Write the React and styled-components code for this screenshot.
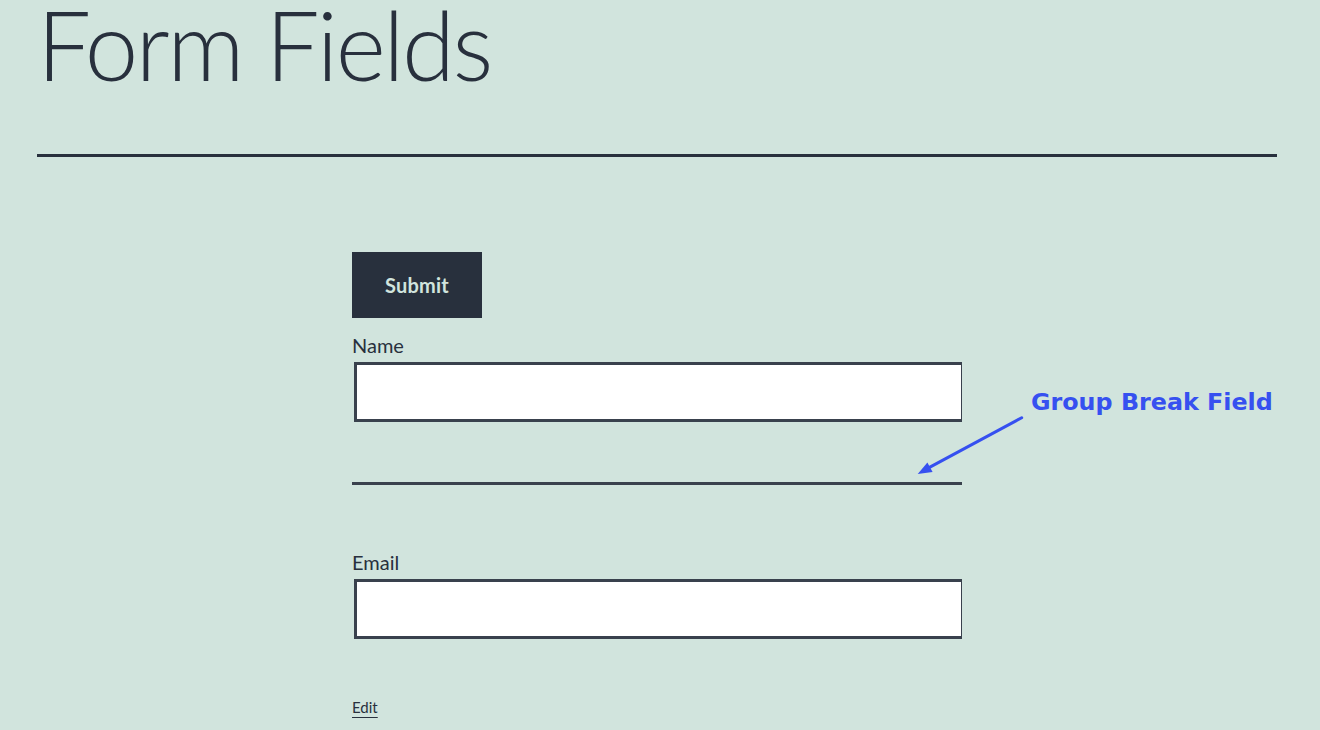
import React from "react";
import styled, { createGlobalStyle } from "styled-components";

const GlobalStyle = createGlobalStyle`
  * { box-sizing: border-box; }
  html, body {
    margin: 0;
    height: 100%;
    overflow: hidden;
  }
  body {
    background: #d1e4dd;
    color: #28303d;
    font-family: Lato, "Liberation Sans", sans-serif;
  }
`;

const Page = styled.div`
  padding: 0 43px 0 37px;
`;

const Header = styled.header`
  padding: 1px 0 95px;
`;

const Title = styled.h1`
  margin: 0;
  font-size: 96px;
  font-weight: 300;
  line-height: 0.9;
  letter-spacing: -2.5px;
`;

const Rule = styled.hr`
  margin: 67px 0 0;
  border: 0;
  height: 3px;
  background: #28303d;
`;

const FormColumn = styled.form`
  position: relative;
  width: 610px;
  margin: 0 auto;
  display: flex;
  flex-direction: column;
  align-items: flex-start;
`;

const SubmitButton = styled.button`
  width: 130px;
  height: 66px;
  border: 0;
  border-radius: 0;
  background: #28303d;
  color: #d1e4dd;
  font-family: Lato, "Liberation Sans", sans-serif;
  font-size: 20px;
  font-weight: 700;
  line-height: 24px;
  letter-spacing: 0.2px;
  cursor: pointer;
`;

const Field = styled.div`
  display: flex;
  flex-direction: column;
  align-self: stretch;
  margin-top: ${(p) => p.$top}px;
`;

const Label = styled.label`
  font-size: 20px;
  line-height: 24px;
`;

const TextInput = styled.input`
  margin: 5px 0 0 2px;
  width: 608px;
  height: 60px;
  border-style: solid;
  border-color: #39414d;
  border-width: 3px 1px 3px 3px;
  border-radius: 0;
  background: #fff;
  outline: none;
`;

const GroupBreak = styled.hr`
  align-self: stretch;
  margin: 60px 0 0;
  border: 0;
  height: 3px;
  background: #39414d;
`;

const EditLink = styled.a`
  margin-top: 59px;
  font-size: 15px;
  line-height: 18px;
  color: #28303d;
  text-decoration: underline;
  text-decoration-thickness: 1px;
  text-underline-offset: 4px;
`;

const Callout = styled.div`
  position: absolute;
  left: 679px;
  top: 139px;
  font-family: "DejaVu Sans", Verdana, sans-serif;
  font-weight: 700;
  font-size: 23.8px;
  line-height: 1;
  color: #3650f0;
  white-space: nowrap;
`;

const CalloutArrow = styled.svg`
  position: absolute;
  left: 548px;
  top: 148px;
  overflow: visible;
`;

export default function App() {
  return (
    <>
      <GlobalStyle />
      <Page>
        <Header>
          <Title>Form Fields</Title>
          <Rule />
        </Header>
        <FormColumn onSubmit={(e) => e.preventDefault()}>
          <SubmitButton type="submit">Submit</SubmitButton>
          <Field $top={15}>
            <Label htmlFor="name">Name</Label>
            <TextInput id="name" type="text" />
          </Field>
          <GroupBreak />
          <Field $top={65}>
            <Label htmlFor="email">Email</Label>
            <TextInput id="email" type="email" />
          </Field>
          <EditLink href="#">Edit</EditLink>

          <Callout>Group Break Field</Callout>
          <CalloutArrow width="130" height="90" viewBox="0 0 130 90">
            <line x1="121.7" y1="17.7" x2="29" y2="67.6" stroke="#3650f0" strokeWidth="3" strokeLinecap="round" />
            <polygon points="17.7,74 32.6,72 27.4,62.6" fill="#3650f0" />
          </CalloutArrow>
        </FormColumn>
      </Page>
    </>
  );
}
